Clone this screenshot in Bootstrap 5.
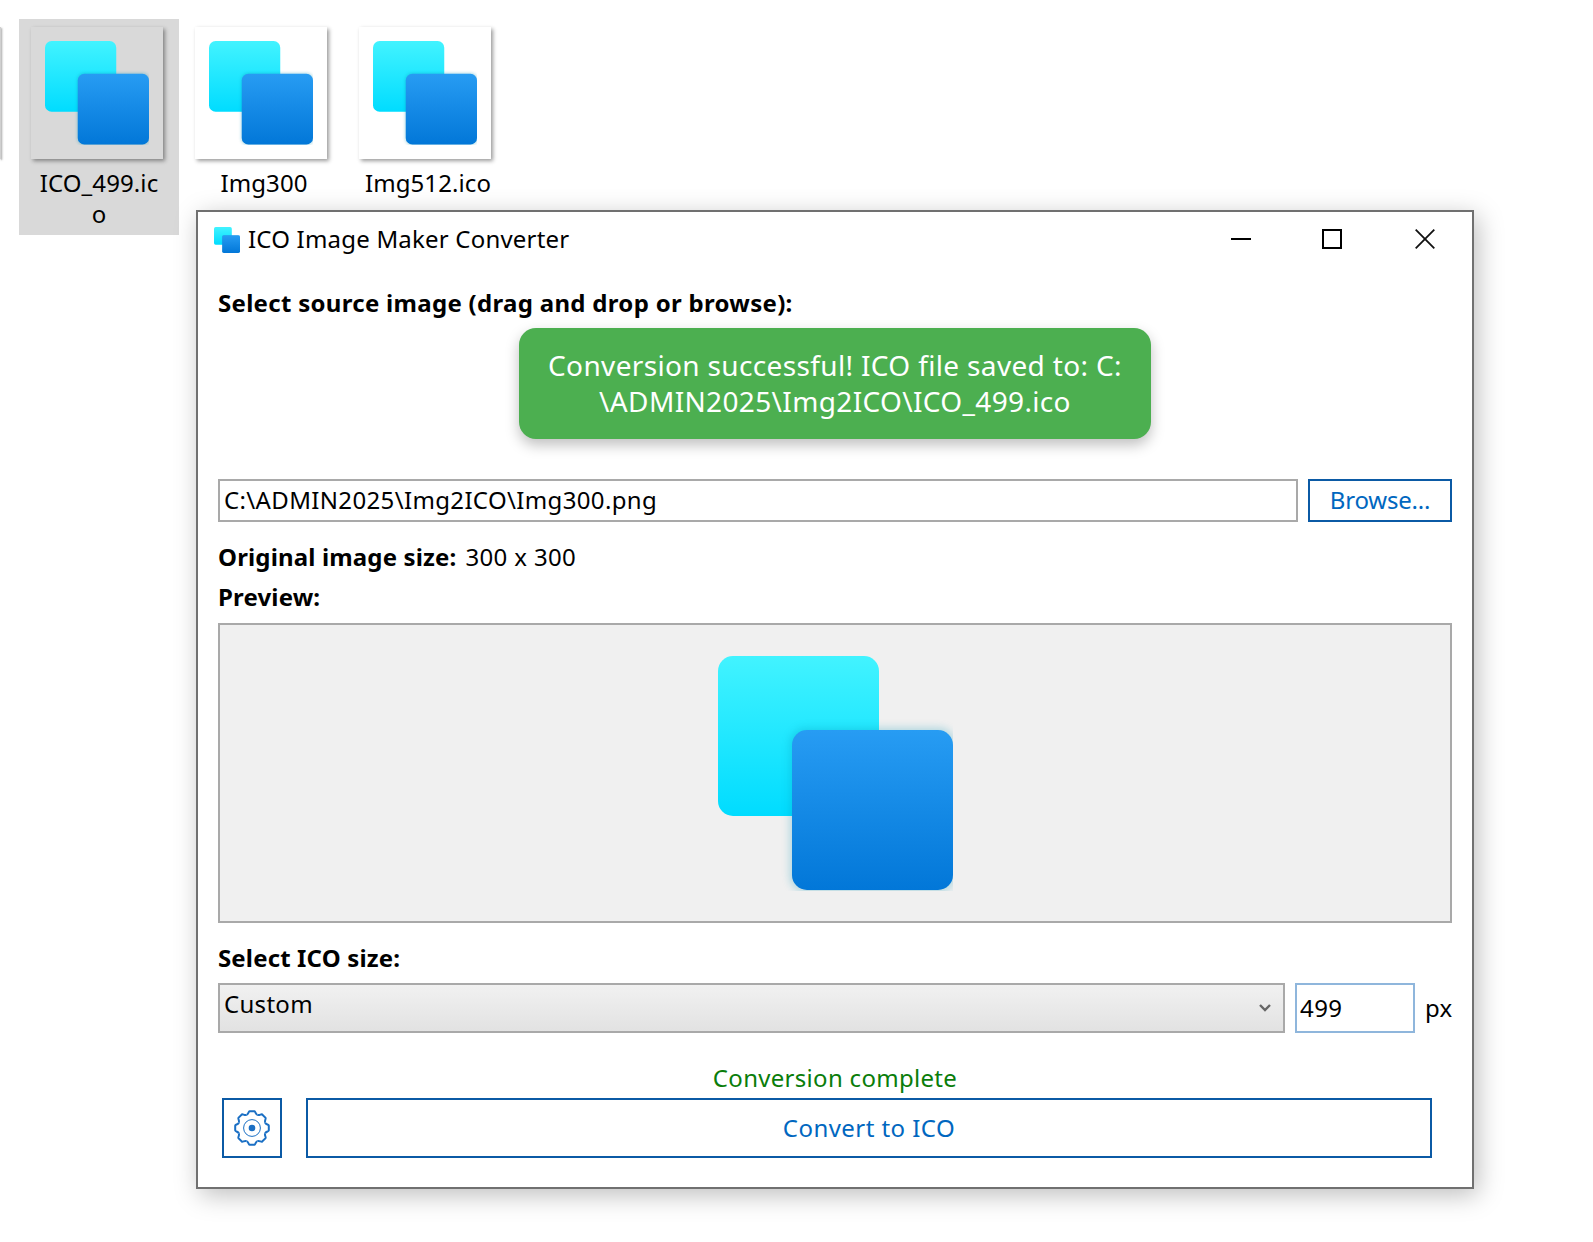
<!DOCTYPE html>
<html lang="en">
<head>
<meta charset="utf-8">
<title>ICO Image Maker Converter</title>
<link href="https://cdn.jsdelivr.net/npm/bootstrap@5.3.0/dist/css/bootstrap.min.css" rel="stylesheet">
<style>
body{background:#fff;font-family:"Noto Sans","Open Sans",sans-serif;color:#000;font-size:24px;height:1242px;overflow:hidden;position:relative;margin:0}
.desk-row{padding-top:19px}
.sliver{width:1px;height:132px;margin-top:8px;background:#d0d0d0;box-shadow:1px 1px 2px rgba(0,0,0,.5)}
.tile{width:160px;height:216px;margin-left:18px;padding-top:8px;text-align:center;line-height:31px;font-size:24px;letter-spacing:.1px}
.tile.is-sel{background:#d9d9d9}
.tile-plain{margin-left:4px;width:160px;padding-left:2px}
.thumb{width:132px;height:132px;padding:14px;margin:0 0 8px 12px;background:#fff;box-shadow:2px 2px 4px rgba(0,0,0,.4)}
.tile-plain .thumb{margin-left:10px}
.is-sel .thumb{background:#d9d9d9}
.logo{display:block;width:104px;height:104px}
.app-window{position:absolute;left:196px;top:210px;width:1278px;height:979px;background:#fff;border:2px solid #707070;box-shadow:4px 6px 24px rgba(0,0,0,.26);padding:0 20px;letter-spacing:.3px}
.title-row{height:54px;margin:0 -4px 0 -4px;letter-spacing:.2px}
.title-icon{display:block;width:26px;height:26px;margin-right:8px;margin-top:1px}
.win-ctl{display:block;width:20px;height:20px}
.ctl-close{margin-left:73px}
.ctl-max{margin-left:71px}
.ctl-gap{margin-right:21px}
.lbl{font-weight:700;line-height:24px;letter-spacing:.15px}
.lbl-src{margin-top:25px;letter-spacing:.3px}
.toast-box{position:absolute;left:321px;top:116px;width:632px;height:111px;background:#4caf50;color:#fff;border-radius:17px;font-size:28px;line-height:36px;text-align:center;box-shadow:0 6px 14px rgba(0,0,0,.25);letter-spacing:.35px;padding-top:19px}
.path-row{margin-top:164px;height:43px;gap:10px}
.path-input{height:43px;border:2px solid #a9a9a9;border-radius:0;padding:0 4px 2px;font-size:24px;color:#000;letter-spacing:.35px;flex:1;min-width:0}
.browse-btn{width:144px;height:43px;border:2px solid #0b5aa5;border-radius:0;background:#fff;color:#0067c0;font-size:24px;padding:0 0 2px;letter-spacing:-.2px}
.size-line{margin-top:23px;line-height:24px;letter-spacing:.35px}
.lbl-inline{margin-right:9px}
.lbl-preview{margin-top:16px}
.preview-box{margin-top:14px;height:300px;background:#f0f0f0;border:2px solid #a9a9a9}
.logo-big{display:block;width:235px;height:235px}
.lbl-ico{margin-top:23px}
.ico-row{margin-top:13px;height:50px;gap:10px}
.size-select{flex:1;min-width:0;height:50px;border:2px solid #a9a9a9;border-radius:0;padding:0 40px 8px 4px;font-size:24px;color:#000;letter-spacing:.3px;background-color:#e8e8e8;background-image:url("data:image/svg+xml,%3Csvg xmlns='http://www.w3.org/2000/svg' viewBox='0 0 12 8'%3E%3Cpath d='M1 1l5 5 5-5' fill='none' stroke='%23666' stroke-width='2.4'/%3E%3C/svg%3E"),linear-gradient(#f1f1f1,#e2e2e2);background-repeat:no-repeat;background-position:right 12px center,0 0;background-size:12px 8px,100% 100%}
.num-input{width:120px;height:50px;border:2px solid #8fb6dc;border-radius:0;padding:0 3px 2px;font-size:24px;color:#000;letter-spacing:.45px;flex:none}
.px-lbl{width:27px;white-space:nowrap;letter-spacing:.2px}
.status-line{margin-top:33px;line-height:24px;text-align:center;color:#0a7d0a}
.action-row{margin-top:8px;height:60px;padding:0 20px 0 4px;gap:24px}
.gear-btn,.convert-btn{height:60px;border:2px solid #0b5aa5;border-radius:0;background:#fff;color:#0067c0;font-size:24px;padding:0;letter-spacing:.45px}
.gear-btn{width:60px;flex:none}
.convert-btn{flex:1}
.gear-icon{display:block;width:36px;height:36px;margin:0 auto}
</style>
</head>
<body>
<svg width="0" height="0" class="position-absolute">
<defs>
<linearGradient id="gc" x1="0" y1="0" x2="0" y2="1"><stop offset="0" stop-color="#42f3ff"/><stop offset="1" stop-color="#00dcff"/></linearGradient>
<linearGradient id="gb" x1="0" y1="0" x2="0" y2="1"><stop offset="0" stop-color="#279cf3"/><stop offset="1" stop-color="#0277d8"/></linearGradient>
<filter id="gs" x="-10%" y="-10%" width="120%" height="120%"><feGaussianBlur stdDeviation="4"/></filter>
<symbol id="logo-art" viewBox="0 0 235 235">
<rect x="0" y="0" width="161" height="160" rx="15" fill="url(#gc)"/>
<rect x="72" y="72" width="165" height="164" rx="16" fill="#0090b0" opacity=".28" filter="url(#gs)"/>
<rect x="74" y="74" width="161" height="160" rx="15" fill="url(#gb)"/>
</symbol>
</defs>
</svg>

<div class="d-flex align-items-start desk-row">
  <div class="sliver"></div>
  <div class="tile is-sel">
    <div class="thumb"><svg class="logo"><use href="#logo-art"/></svg></div>
    ICO_499.ic<br>o
  </div>
  <div class="tile tile-plain">
    <div class="thumb"><svg class="logo"><use href="#logo-art"/></svg></div>
    Img300
  </div>
  <div class="tile tile-plain">
    <div class="thumb"><svg class="logo"><use href="#logo-art"/></svg></div>
    Img512.ico
  </div>
</div>

<div class="app-window">
  <div class="title-row d-flex align-items-center">
    <svg class="title-icon"><use href="#logo-art"/></svg>
    <span>ICO Image Maker Converter</span>
    <div class="ms-auto d-flex align-items-center ctl-gap">
      <svg class="win-ctl" viewBox="0 0 20 20"><path d="M0 10h20" stroke="#000" stroke-width="2"/></svg>
      <svg class="win-ctl ctl-max" viewBox="0 0 20 20"><rect x="1" y="1" width="18" height="18" fill="none" stroke="#000" stroke-width="2"/></svg>
      <svg class="win-ctl ctl-close" viewBox="0 0 20 20"><path d="M.7.7l18.6 18.6M19.3.7L.7 19.3" stroke="#111" stroke-width="1.8"/></svg>
    </div>
  </div>
  <div class="lbl lbl-src">Select source image (drag and drop or browse):</div>
  <div class="toast-box">Conversion successful! ICO file saved to: C:<br>\ADMIN2025\Img2ICO\ICO_499.ico</div>
  <div class="path-row d-flex">
    <input class="form-control path-input" type="text" value="C:\ADMIN2025\Img2ICO\Img300.png">
    <button class="btn browse-btn" type="button">Browse...</button>
  </div>
  <div class="size-line"><span class="lbl lbl-inline">Original image size:</span>300 x 300</div>
  <div class="lbl lbl-preview">Preview:</div>
  <div class="preview-box d-flex align-items-center justify-content-center">
    <svg class="logo-big"><use href="#logo-art"/></svg>
  </div>
  <div class="lbl lbl-ico">Select ICO size:</div>
  <div class="ico-row d-flex align-items-center">
    <select class="form-select size-select"><option>Custom</option></select>
    <input class="form-control num-input" type="text" value="499">
    <span class="px-lbl">px</span>
  </div>
  <div class="status-line">Conversion complete</div>
  <div class="action-row d-flex">
    <button class="btn gear-btn" type="button" aria-label="Settings">
      <svg class="gear-icon" viewBox="-18 -18 36 36" fill="none" stroke="#1a6fc4" stroke-width="2">
        <g>
          <path id="gw" d="M-5.43-13.12C-3.4-13.9-3.6-16.6-2.4-16.8H2.4C3.6-16.6 3.4-13.9 5.43-13.12"/>
          <use href="#gw" transform="rotate(45)"/><use href="#gw" transform="rotate(90)"/><use href="#gw" transform="rotate(135)"/><use href="#gw" transform="rotate(180)"/><use href="#gw" transform="rotate(225)"/><use href="#gw" transform="rotate(270)"/><use href="#gw" transform="rotate(315)"/>
        </g>
        <circle r="8.4" stroke-width="1"/>
        <circle r="3.3" fill="#1a6fc4" stroke="none"/>
      </svg>
    </button>
    <button class="btn convert-btn" type="button">Convert to ICO</button>
  </div>
</div>
<script src="https://cdn.jsdelivr.net/npm/bootstrap@5.3.0/dist/js/bootstrap.bundle.min.js"></script>
</body>
</html>
